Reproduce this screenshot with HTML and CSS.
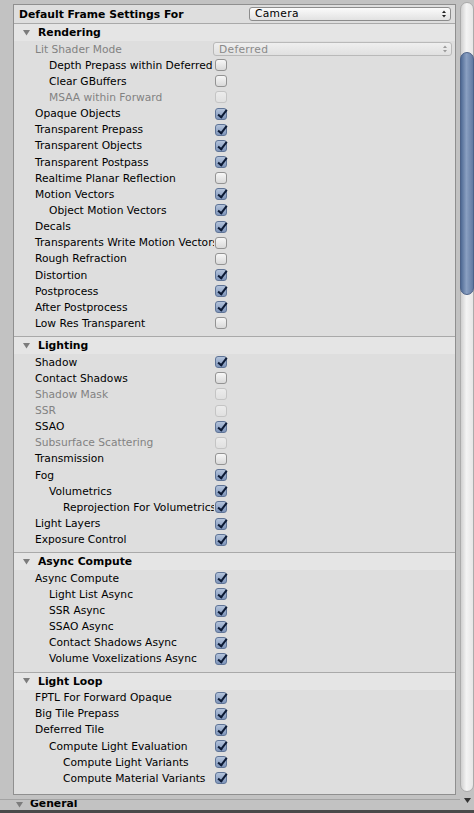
FILE: index.html
```html
<!DOCTYPE html>
<html>
<head>
<meta charset="utf-8">
<link rel="stylesheet" href="styles.css">
</head>
<body>
<div class="window">
  <div class="main">
    <div class="panel">
      <div class="title-row">
        <span class="title">Default Frame Settings For</span>
        <div class="dropdown cam"><span>Camera</span><svg class="arr" width="4" height="8" viewBox="0 0 4 8"><polygon points="0,3 2,0.5 4,3" /><polygon points="0,5 2,7.5 4,5" /></svg></div>
      </div>

      <div class="section">
        <div class="sec-head"><svg class="tri" width="7" height="6" viewBox="0 0 7 6"><polygon points="0,0 7,0 3.5,5.5"/></svg><span>Rendering</span></div>
        <div class="row dis"><span class="label">Lit Shader Mode</span><div class="dropdown lit"><span>Deferred</span><svg class="arr" width="4" height="8" viewBox="0 0 4 8"><polygon points="0,3 2,0.5 4,3" /><polygon points="0,5 2,7.5 4,5" /></svg></div></div>
        <div class="row i1"><span class="label">Depth Prepass within Deferred</span><span class="cb"></span></div>
        <div class="row i1"><span class="label">Clear GBuffers</span><span class="cb"></span></div>
        <div class="row i1 dis"><span class="label">MSAA within Forward</span><span class="cb"></span></div>
        <div class="row"><span class="label">Opaque Objects</span><span class="cb on"></span></div>
        <div class="row"><span class="label">Transparent Prepass</span><span class="cb on"></span></div>
        <div class="row"><span class="label">Transparent Objects</span><span class="cb on"></span></div>
        <div class="row"><span class="label">Transparent Postpass</span><span class="cb on"></span></div>
        <div class="row"><span class="label">Realtime Planar Reflection</span><span class="cb"></span></div>
        <div class="row"><span class="label">Motion Vectors</span><span class="cb on"></span></div>
        <div class="row i1"><span class="label">Object Motion Vectors</span><span class="cb on"></span></div>
        <div class="row"><span class="label">Decals</span><span class="cb on"></span></div>
        <div class="row"><span class="label">Transparents Write Motion Vectors</span><span class="cb"></span></div>
        <div class="row"><span class="label">Rough Refraction</span><span class="cb"></span></div>
        <div class="row"><span class="label">Distortion</span><span class="cb on"></span></div>
        <div class="row"><span class="label">Postprocess</span><span class="cb on"></span></div>
        <div class="row"><span class="label">After Postprocess</span><span class="cb on"></span></div>
        <div class="row"><span class="label">Low Res Transparent</span><span class="cb"></span></div>
      </div>

      <div class="section">
        <div class="sec-head"><svg class="tri" width="7" height="6" viewBox="0 0 7 6"><polygon points="0,0 7,0 3.5,5.5"/></svg><span>Lighting</span></div>
        <div class="row"><span class="label">Shadow</span><span class="cb on"></span></div>
        <div class="row"><span class="label">Contact Shadows</span><span class="cb"></span></div>
        <div class="row dis"><span class="label">Shadow Mask</span><span class="cb"></span></div>
        <div class="row dis"><span class="label">SSR</span><span class="cb"></span></div>
        <div class="row"><span class="label">SSAO</span><span class="cb on"></span></div>
        <div class="row dis"><span class="label">Subsurface Scattering</span><span class="cb"></span></div>
        <div class="row"><span class="label">Transmission</span><span class="cb"></span></div>
        <div class="row"><span class="label">Fog</span><span class="cb on"></span></div>
        <div class="row i1"><span class="label">Volumetrics</span><span class="cb on"></span></div>
        <div class="row i2"><span class="label">Reprojection For Volumetrics</span><span class="cb on"></span></div>
        <div class="row"><span class="label">Light Layers</span><span class="cb on"></span></div>
        <div class="row"><span class="label">Exposure Control</span><span class="cb on"></span></div>
      </div>

      <div class="section">
        <div class="sec-head"><svg class="tri" width="7" height="6" viewBox="0 0 7 6"><polygon points="0,0 7,0 3.5,5.5"/></svg><span>Async Compute</span></div>
        <div class="row"><span class="label">Async Compute</span><span class="cb on"></span></div>
        <div class="row i1"><span class="label">Light List Async</span><span class="cb on"></span></div>
        <div class="row i1"><span class="label">SSR Async</span><span class="cb on"></span></div>
        <div class="row i1"><span class="label">SSAO Async</span><span class="cb on"></span></div>
        <div class="row i1"><span class="label">Contact Shadows Async</span><span class="cb on"></span></div>
        <div class="row i1"><span class="label">Volume Voxelizations Async</span><span class="cb on"></span></div>
      </div>

      <div class="section last">
        <div class="sec-head"><svg class="tri" width="7" height="6" viewBox="0 0 7 6"><polygon points="0,0 7,0 3.5,5.5"/></svg><span>Light Loop</span></div>
        <div class="row"><span class="label">FPTL For Forward Opaque</span><span class="cb on"></span></div>
        <div class="row"><span class="label">Big Tile Prepass</span><span class="cb on"></span></div>
        <div class="row"><span class="label">Deferred Tile</span><span class="cb on"></span></div>
        <div class="row i1"><span class="label">Compute Light Evaluation</span><span class="cb on"></span></div>
        <div class="row i2"><span class="label">Compute Light Variants</span><span class="cb on"></span></div>
        <div class="row i2"><span class="label">Compute Material Variants</span><span class="cb on"></span></div>
      </div>
    </div>
    <div class="general"><svg class="tri" width="7" height="6" viewBox="0 0 7 6"><polygon points="0,0 7,0 3.5,5.5"/></svg><span>General</span></div>
  </div>
  <div class="scrollbar">
    <div class="track"><div class="thumb"></div></div>
    <div class="sb-arrow"><svg width="7" height="5" viewBox="0 0 7 5"><polygon points="0,0 7,0 3.5,5"/></svg></div>
  </div>
</div>
<div class="bottombar"></div>
</body>
</html>
```
FILE: styles.css
```css
html, body {
  margin: 0;
  padding: 0;
}
body {
  background: #c2c2c2;
  font-family: "DejaVu Sans", Verdana, sans-serif;
  font-size: 10.7px;
  color: #000;
  width: 474px;
  height: 813px;
  overflow: hidden;
}
.window {
  display: flex;
  height: 810px;
}
.main {
  width: 460px;
  display: flex;
  flex-direction: column;
}
.panel {
  margin: 4px 4px 0 13px;
  border: 1px solid #8f8f8f;
  background: #dedede;
  padding-bottom: 3.5px;
}
.title-row {
  height: 18px;
  display: flex;
  align-items: center;
  justify-content: space-between;
  padding: 0 4px 0 5px;
  border-bottom: 1px solid #a9a9a9;
}
.title {
  font-weight: bold;
  font-size: 10.8px;
}
.dropdown {
  height: 14px;
  box-sizing: border-box;
  border: 1px solid #8c8c8c;
  border-radius: 3px;
  background: linear-gradient(#fbfbfb, #e2e2e2);
  display: flex;
  align-items: center;
  justify-content: space-between;
  padding: 0 4px 0 5px;
  letter-spacing: 0.3px;
}
.dropdown .arr polygon { fill: #222; }
.cam {
  width: 202px;
  margin-top: -1px;
}
.lit {
  width: 239px;
  margin-left: -1px;
  border-color: #b9b9b9;
  background: linear-gradient(#efefef, #e0e0e0);
  color: #8a8a8a;
}
.lit .arr polygon { fill: #9a9a9a; }
.section {
  border-bottom: 1px solid #a9a9a9;
  padding-bottom: 4.5px;
}
.section.last {
  border-bottom: none;
}
.sec-head {
  height: 17px;
  background: #e5e5e5;
  display: flex;
  align-items: center;
  font-weight: bold;
  font-size: 10.8px;
}
.tri {
  margin-left: 9px;
  margin-right: 8px;
}
.tri polygon { fill: #7c7c7c; }
.row {
  height: 16.15px;
  display: flex;
  align-items: center;
}
.label {
  width: 200px;
  box-sizing: border-box;
  padding-left: 21px;
  white-space: nowrap;
  overflow: hidden;
  flex: none;
}
.row.i1 .label { padding-left: 35px; }
.row.i2 .label { padding-left: 49px; }
.row.dis .label { color: #828282; }
.cb {
  position: relative;
  width: 12px;
  height: 12px;
  box-sizing: border-box;
  margin-left: 1px;
  border: 1px solid #939393;
  border-radius: 3px;
  background: linear-gradient(#f7f7f7, #d9d9d9);
  flex: none;
}
.row.dis .cb {
  border-color: #c4c4c4;
  background: linear-gradient(#ececec, #e0e0e0);
}
.cb.on {
  border-color: #5f7497;
  background: linear-gradient(#b3c3db, #7f95ba);
}
.cb.on::after {
  content: "";
  position: absolute;
  left: 4px;
  top: -1px;
  width: 3px;
  height: 8px;
  border-right: 2px solid #0c1a35;
  border-bottom: 2px solid #0c1a35;
  transform: rotate(38deg);
}
.general {
  margin-top: 4px;
  border-top: 1px solid #a3a3a3;
  height: 13px;
  display: flex;
  align-items: flex-end;
  font-weight: bold;
  font-size: 10.8px;
  line-height: 12px;
  overflow: hidden;
}
.general .tri {
  margin-left: 16px;
  margin-right: 7px;
  margin-bottom: 2px;
}
.scrollbar {
  width: 14px;
  display: flex;
  flex-direction: column;
}
.track {
  margin-top: 2px;
  height: 790px;
  box-sizing: border-box;
  border: 1px solid #ababab;
  border-radius: 7px;
  background: linear-gradient(90deg, #cfcfcf, #f4f4f4 45%, #e6e6e6);
}
.thumb {
  margin-top: 49px;
  height: 243px;
  margin-left: -1px;
  margin-right: -1px;
  border-radius: 7px;
  background: linear-gradient(90deg, #4f6a94, #8aa0c2 45%, #617aa2);
  border: 1px solid #4c6288;
  box-sizing: border-box;
}
.sb-arrow {
  flex: 1;
  display: flex;
  justify-content: center;
  align-items: center;
  padding-bottom: 2px;
}
.sb-arrow polygon { fill: #333; }
.bottombar {
  height: 3px;
  background: #4a4a4a;
}
```
